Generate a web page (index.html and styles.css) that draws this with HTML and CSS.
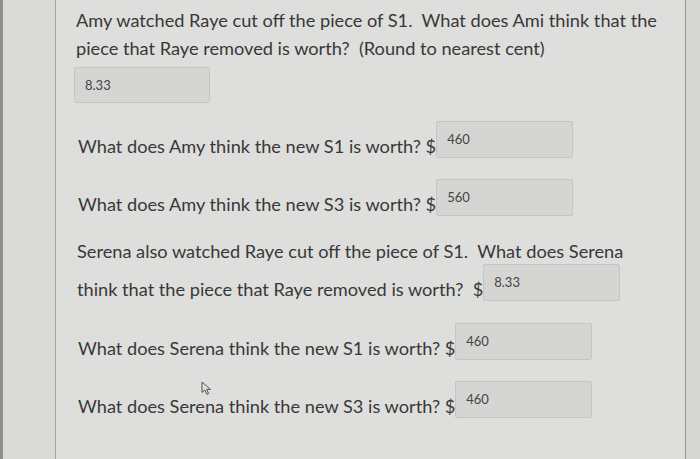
FILE: index.html
```html
<!DOCTYPE html>
<html>
<head>
<meta charset="utf-8">
<link rel="stylesheet" href="styles.css">
</head>
<body>
<div class="page">
  <div class="edge"></div>
  <div class="gutter"></div>
  <div class="panel">
    <p class="para">Amy watched Raye cut off the piece of S1.&nbsp; What does Ami think that the<br>piece that Raye removed is worth?&nbsp; (Round to nearest cent)</p>
    <div class="box box-first">8.33</div>

    <div class="row row-a1">
      <span class="label">What does Amy think the new S1 is worth? $</span>
      <div class="box">460</div>
    </div>
    <div class="row row-a3">
      <span class="label">What does Amy think the new S3 is worth? $</span>
      <div class="box">560</div>
    </div>

    <p class="para2">Serena also watched Raye cut off the piece of S1.&nbsp; What does Serena</p>
    <div class="row row-s0">
      <span class="label">think that the piece that Raye removed is worth?&nbsp; $</span>
      <div class="box">8.33</div>
    </div>
    <div class="row row-s1">
      <span class="label">What does Serena think the new S1 is worth? $</span>
      <div class="box">460</div>
    </div>
    <div class="row row-s3">
      <span class="label">What does Serena think the new S3 is worth? $</span>
      <div class="box">460</div>
      <svg class="cursor" width="13" height="15" viewBox="0 0 13 15"><path d="M1 1 L1 11.5 L3.8 9 L5.9 13.4 L7.6 12.6 L5.6 8.4 L9.5 8.4 Z" fill="none" stroke="#555" stroke-width="1"/></svg>
    </div>
  </div>
  <div class="right"></div>
</div>
</body>
</html>
```
FILE: styles.css
```css
html, body {
  margin: 0;
  padding: 0;
}
body {
  width: 700px;
  height: 459px;
  overflow: hidden;
  background: #dcdcda;
  font-family: Lato, "Open Sans", sans-serif;
  color: #383838;
}
.page {
  display: flex;
  width: 700px;
  height: 459px;
}
.edge {
  flex: 0 0 3px;
  background: #8f8f8e;
}
.gutter {
  flex: 0 0 52px;
  background: #dadad8;
}
.panel {
  position: relative;
  flex: 0 0 631px;
  box-sizing: border-box;
  padding-left: 20px;
  border-left: 1px solid #a3a3a1;
  border-right: 1px solid #949492;
  background: #dededc;
  overflow: hidden;
}
.right {
  flex: 1 1 auto;
  background: #d6d6d4;
}
.para {
  margin: 6px 0 0 0;
  font-size: 18.2px;
  line-height: 28px;
  white-space: nowrap;
}
.para2 {
  margin: 22px 0 0 1px;
  font-size: 18.2px;
  line-height: 26px;
  white-space: nowrap;
}
.box {
  box-sizing: border-box;
  width: 137px;
  height: 37px;
  background: #d5d5d3;
  border: 1px solid #c5c5c3;
  border-radius: 2px;
  font-size: 13px;
  line-height: 35px;
  padding-left: 10px;
  color: #444;
  flex: none;
}
.box-first {
  margin: 5px 0 0 -2px;
  width: 136px;
  height: 36px;
  line-height: 34px;
}
.row {
  position: relative;
  display: flex;
  align-items: flex-end;
  margin-left: 2px;
}
.label {
  font-size: 18.2px;
  line-height: 20px;
  margin-bottom: 2px;
  white-space: nowrap;
}
.row-a1 { margin-top: 18px; }
.row-a3 { margin-top: 21px; }
.row-s0 { margin-top: 0; margin-left: 1px; }
.row-s1 { margin-top: 22px; }
.row-s3 { margin-top: 21px; }
.cursor {
  position: absolute;
  left: 123px;
  top: 0;
}
```
